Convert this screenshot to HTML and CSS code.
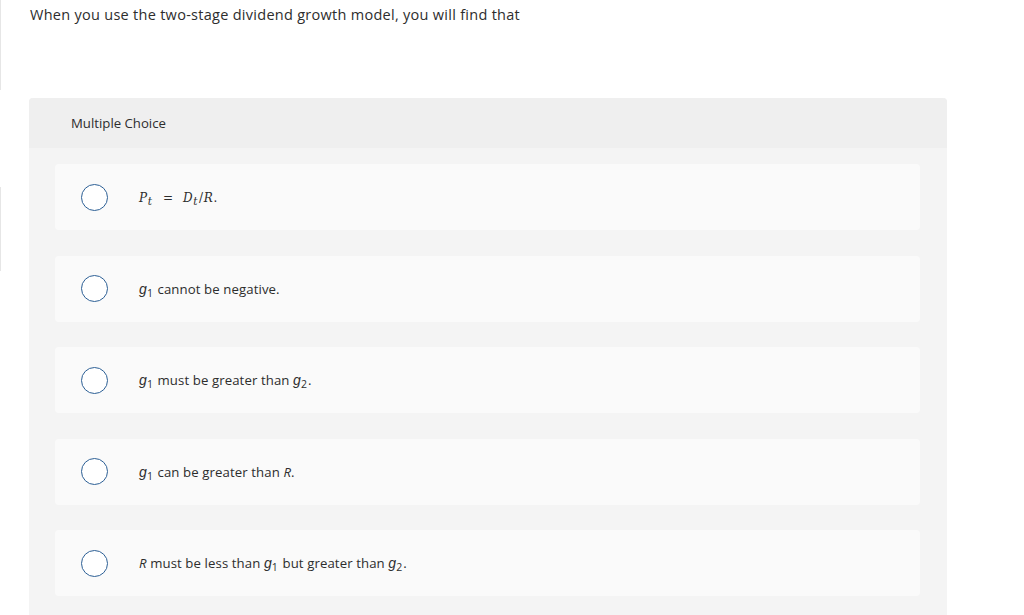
FILE: index.html
```html
<!DOCTYPE html>
<html>
<head>
<meta charset="utf-8">
<link rel="stylesheet" href="styles.css">
</head>
<body>
<div class="edge edge-top"></div>
<div class="edge edge-mid"></div>
<p class="question">When you use the two-stage dividend growth model, you will find that</p>
<section class="mc">
  <header class="mc-head">Multiple Choice</header>
  <div class="mc-body">
    <div class="opt"><span class="radio"></span><span class="txt"><span class="eq"><i>P</i><sub><i>t</i></sub> <span class="op">=</span> <i>D</i><sub><i>t</i></sub>/<i>R</i>.</span></span></div>
    <div class="opt"><span class="radio"></span><span class="txt"><i class="v">g</i><sub>1</sub> cannot be negative.</span></div>
    <div class="opt"><span class="radio"></span><span class="txt"><i class="v">g</i><sub>1</sub> must be greater than <i class="v">g</i><sub>2</sub>.</span></div>
    <div class="opt"><span class="radio"></span><span class="txt"><i class="v">g</i><sub>1</sub> can be greater than <i class="r">R</i>.</span></div>
    <div class="opt"><span class="radio"></span><span class="txt"><i class="r">R</i> must be less than <i class="v">g</i><sub>1</sub> but greater than <i class="v">g</i><sub>2</sub>.</span></div>
  </div>
</section>
</body>
</html>
```

FILE: styles.css
```css
html, body {
  margin: 0;
  padding: 0;
  background: #fff;
}
body {
  font-family: "Open Sans", "Liberation Sans", sans-serif;
  color: #2d2d2d;
  position: relative;
  height: 615px;
  overflow: hidden;
}
.edge {
  position: absolute;
  left: 0;
  width: 1px;
  background: #e6e6e6;
}
.edge-top { top: 0; height: 90px; }
.edge-mid { top: 187px; height: 84px; }
.question {
  margin: 0;
  padding: 5px 0 0 30px;
  font-size: 14.5px;
  line-height: 20px;
  height: 93px;
  letter-spacing: 0.28px;
}
.mc {
  margin-left: 29px;
  width: 918px;
  border-radius: 4px 4px 0 0;
  overflow: hidden;
  background: #f4f4f4;
}
.mc-head {
  height: 50px;
  background: #efefef;
  display: flex;
  align-items: center;
  padding-left: 42px;
  font-size: 13.2px;
}
.mc-body {
  padding: 16px 27px 30px 26px;
  display: flex;
  flex-direction: column;
  gap: 25.5px;
}
.opt {
  height: 66px;
  background: #fafafa;
  border-radius: 4px;
  display: flex;
  align-items: center;
}
.radio {
  width: 25px;
  height: 25px;
  border: 1.5px solid #2c5f95;
  border-radius: 50%;
  background: #fff;
  margin-left: 26px;
  flex: none;
}
.txt {
  margin-left: 31px;
  font-size: 13.2px;
  letter-spacing: 0.1px;
}
.txt i.r {
  font-family: "Open Sans", sans-serif;
  font-style: italic;
}
.txt i.v {
  font-family: "Liberation Sans", sans-serif;
  font-size: 14px;
}
.txt sub {
  font-size: 10.5px;
  vertical-align: -3px;
  line-height: 0;
  padding-right: 1px;
}
.eq {
  font-family: "DejaVu Serif", serif;
  font-size: 12px;
  letter-spacing: 0.6px;
}
.eq i { font-family: "DejaVu Serif", serif; }
.eq sub { font-size: 10.5px; padding-right: 1px; }
.eq .op { padding: 0 5px; }
```
